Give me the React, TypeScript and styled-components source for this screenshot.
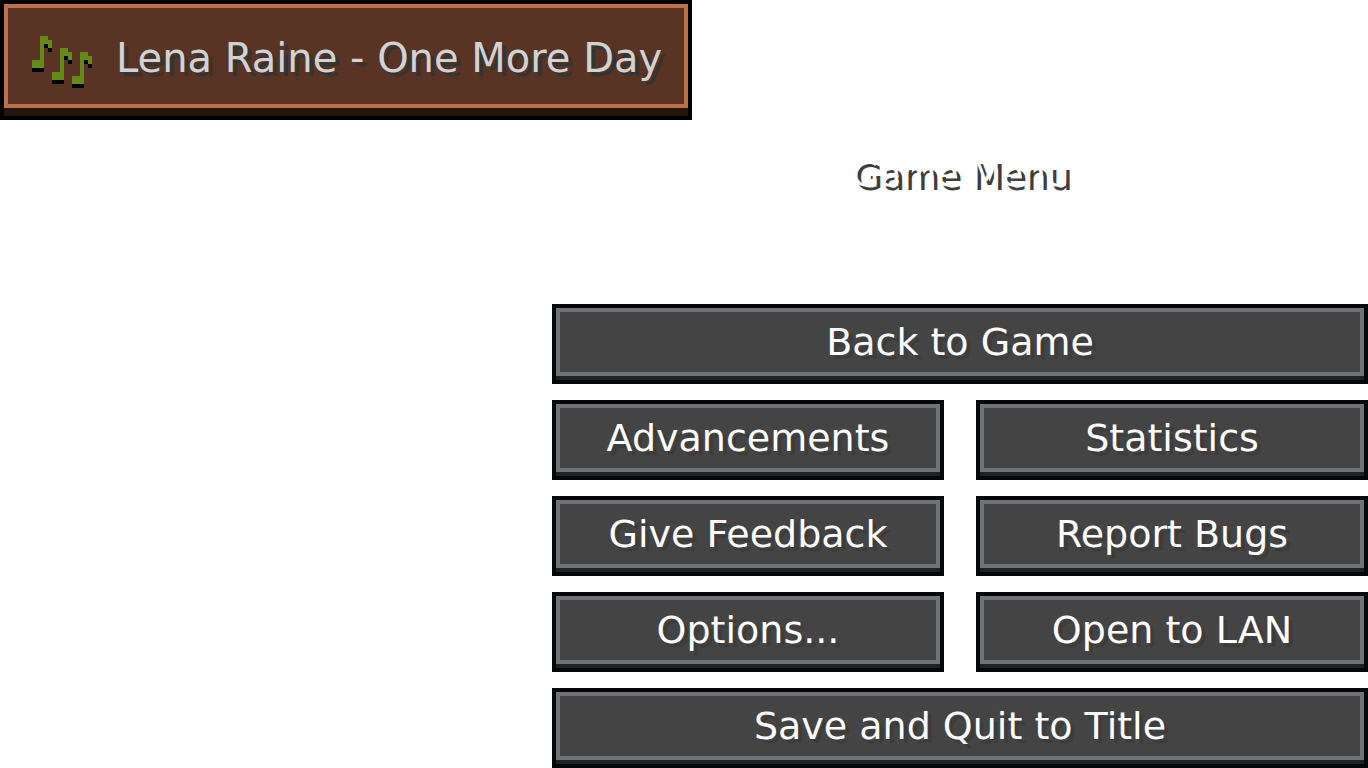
import React from "react";
import styled, { createGlobalStyle } from "styled-components";

const GlobalStyle = createGlobalStyle`
  *, *::before, *::after { box-sizing: border-box; }
  body {
    margin: 0;
    background: #ffffff;
    font-family: "DejaVu Sans", sans-serif;
    font-size: 38px;
    line-height: 44px;
  }
`;

const Toast = styled.aside`
  width: 692px;
  max-width: 100%;
  padding-bottom: 8px;
  border: 4px solid #000000;
  background: #24150d;
`;

const ToastBody = styled.div`
  display: flex;
  align-items: flex-start;
  gap: 24px;
  min-height: 104px;
  padding: 28px 20px 16px 24px;
  border: 4px solid #ba7049;
  background: #593323;
`;

const NotesIcon = styled.svg`
  flex: none;
  width: 60px;
  height: 52px;
`;

const TrackName = styled.span`
  color: #d2d2d2;
  font-size: 40px;
  text-shadow: 4px 4px 0 #343434;
  white-space: nowrap;
`;

const Menu = styled.main`
  width: 816px;
  max-width: 100%;
  margin: 32px 0 0 auto;
`;

const Title = styled.h1`
  margin: 0 0 108px;
  color: #ffffff;
  font-size: 36px;
  font-weight: 400;
  line-height: 44px;
  text-align: center;
  text-shadow: 4px 4px 0 #3e3e3e;
`;

const ButtonGrid = styled.nav`
  display: grid;
  grid-template-columns: 1fr 1fr;
  gap: 16px 32px;
`;

const MenuButton = styled.button<{ $wide?: boolean }>`
  grid-column: ${({ $wide }) => ($wide ? "1 / -1" : "auto")};
  min-height: 80px;
  padding: 4px 8px 8px;
  border: 4px solid #060708;
  border-radius: 0;
  background: #444444;
  box-shadow:
    inset 0 -4px 0 #202221,
    inset 0 -8px 0 #717276,
    inset 0 0 0 4px #717276;
  color: #fcfcfc;
  font: inherit;
  text-shadow: 4px 4px 0 #3c3c3c;
  white-space: nowrap;
  cursor: pointer;
`;

const notes = [
  { x: 0, y: 0 },
  { x: 5, y: 3 },
  { x: 10, y: 4 },
];

const entries = [
  { label: "Back to Game", wide: true },
  { label: "Advancements" },
  { label: "Statistics" },
  { label: "Give Feedback" },
  { label: "Report Bugs" },
  { label: "Options..." },
  { label: "Open to LAN" },
  { label: "Save and Quit to Title", wide: true },
];

export default function App() {
  return (
    <>
      <GlobalStyle />
      <Toast>
        <ToastBody>
          <NotesIcon viewBox="0 0 15 13" shapeRendering="crispEdges" aria-hidden="true">
            {notes.map(({ x, y }) => (
              <g key={x} transform={`translate(${x} ${y})`}>
                <path fill="#648a18" d="M2 0h2v1h1v2h-1v-1h-2zM2 2h1v6h-3v-2h2z" />
                <path fill="#000000" d="M3 2h1v1h1v1h-1v-1h-1zM0 8h3v1h-3z" />
              </g>
            ))}
          </NotesIcon>
          <TrackName>Lena Raine - One More Day</TrackName>
        </ToastBody>
      </Toast>
      <Menu>
        <Title>Game Menu</Title>
        <ButtonGrid aria-label="Game Menu">
          {entries.map(({ label, wide }) => (
            <MenuButton key={label} type="button" $wide={wide}>
              {label}
            </MenuButton>
          ))}
        </ButtonGrid>
      </Menu>
    </>
  );
}
